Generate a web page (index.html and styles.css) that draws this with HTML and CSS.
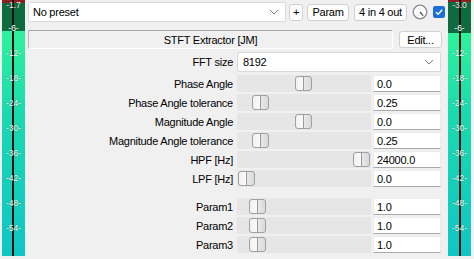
FILE: index.html
```html
<!DOCTYPE html>
<html lang="en">
<head>
<meta charset="utf-8">
<title>STFT Extractor [JM]</title>
<link rel="stylesheet" href="styles.css">
</head>
<body>
  <div class="meter meter-left">
    <div class="meter-peak">-1.7</div>
    <div class="meter-tick">-6-</div>
    <div class="meter-tick">-12-</div>
    <div class="meter-tick">-18-</div>
    <div class="meter-tick">-24-</div>
    <div class="meter-tick">-30-</div>
    <div class="meter-tick">-36-</div>
    <div class="meter-tick">-42-</div>
    <div class="meter-tick">-48-</div>
    <div class="meter-tick">-54-</div>
  </div>

  <div class="main">
    <div class="topbar">
      <div class="select preset-select">
        <span>No preset</span>
        <svg class="chevron" width="10" height="6" viewBox="0 0 10 6"><polyline points="1,1 5,5 9,1" /></svg>
      </div>
      <div class="btn btn-plus">+</div>
      <div class="btn btn-param">Param</div>
      <div class="btn btn-io">4 in 4 out</div>
      <svg class="knob" width="16" height="16" viewBox="0 0 16 16">
        <circle cx="8" cy="8" r="6.8" />
        <line x1="8" y1="8" x2="11.2" y2="11.6" />
      </svg>
      <svg class="check" width="12" height="12" viewBox="0 0 12 12">
        <rect x="0" y="0" width="12" height="12" rx="2" />
        <polyline points="3,6.2 5.1,8.3 9.2,3.8" />
      </svg>
    </div>

    <div class="header-row">
      <div class="fx-name">STFT Extractor [JM]</div>
      <div class="btn btn-edit">Edit...</div>
    </div>

    <div class="fft-row">
      <div class="label">FFT size</div>
      <div class="select fft-select">
        <span>8192</span>
        <svg class="chevron" width="10" height="6" viewBox="0 0 10 6"><polyline points="1,1 5,5 9,1" /></svg>
      </div>
    </div>

    <div class="param-row">
      <div class="label">Phase Angle</div>
      <div class="track"><div class="thumb" style="margin-left: 58px"></div></div>
      <div class="value">0.0</div>
    </div>
    <div class="param-row">
      <div class="label">Phase Angle tolerance</div>
      <div class="track"><div class="thumb" style="margin-left: 15px"></div></div>
      <div class="value">0.25</div>
    </div>
    <div class="param-row">
      <div class="label">Magnitude Angle</div>
      <div class="track"><div class="thumb" style="margin-left: 58px"></div></div>
      <div class="value">0.0</div>
    </div>
    <div class="param-row">
      <div class="label">Magnitude Angle tolerance</div>
      <div class="track"><div class="thumb" style="margin-left: 15px"></div></div>
      <div class="value">0.25</div>
    </div>
    <div class="param-row">
      <div class="label">HPF [Hz]</div>
      <div class="track"><div class="thumb" style="margin-left: 116px"></div></div>
      <div class="value">24000.0</div>
    </div>
    <div class="param-row">
      <div class="label">LPF [Hz]</div>
      <div class="track"><div class="thumb" style="margin-left: 1px"></div></div>
      <div class="value">0.0</div>
    </div>

    <div class="spacer"></div>

    <div class="param-row">
      <div class="label">Param1</div>
      <div class="track"><div class="thumb" style="margin-left: 12px"></div></div>
      <div class="value">1.0</div>
    </div>
    <div class="param-row">
      <div class="label">Param2</div>
      <div class="track"><div class="thumb" style="margin-left: 12px"></div></div>
      <div class="value">1.0</div>
    </div>
    <div class="param-row">
      <div class="label">Param3</div>
      <div class="track"><div class="thumb" style="margin-left: 12px"></div></div>
      <div class="value">1.0</div>
    </div>
  </div>

  <div class="meter meter-right">
    <div class="meter-peak">-3.0</div>
    <div class="meter-tick">-6-</div>
    <div class="meter-tick">-12-</div>
    <div class="meter-tick">-18-</div>
    <div class="meter-tick">-24-</div>
    <div class="meter-tick">-30-</div>
    <div class="meter-tick">-36-</div>
    <div class="meter-tick">-42-</div>
    <div class="meter-tick">-48-</div>
    <div class="meter-tick">-54-</div>
  </div>
</body>
</html>
```

FILE: styles.css
```css
html, body {
    margin: 0;
    padding: 0;
}
body {
    width: 474px;
    height: 259px;
    overflow: hidden;
    background: #f0f0f0;
    display: flex;
    align-items: flex-start;
    font-family: "Liberation Sans", Arial, sans-serif;
    font-size: 11px;
    letter-spacing: -0.25px;
    color: #000;
}

/* level meters */
.meter {
    position: relative;
    width: 23px;
    height: 256px;
    display: flex;
    flex-direction: column;
    align-items: center;
    font-size: 8.5px;
    letter-spacing: 0;
    color: #f4fff8;
    text-shadow: 0 0 1px #2a5a44;
}
.meter::before {
    content: "";
    position: absolute;
    top: 0;
    bottom: 0;
    left: 10px;
    width: 2px;
    background: #111;
}
.meter-left {
    margin-left: 2px;
    background: linear-gradient(to bottom, #8c1f22 0, #8c1f22 3px, #0d6b3f 3px, #0d6b3f 31px, #2ff29b 31px, #1ad9b0 45%, #10c6c4 100%);
}
.meter-right {
    margin-left: 1px;
    background: linear-gradient(to bottom, #8c1f22 0, #8c1f22 2px, #0d6b3f 2px, #0d6b3f 33px, #2ff29b 33px, #1ad9b0 45%, #10c6c4 100%);
}
.meter-right::before {
    left: 11px;
}
.meter-peak {
    position: relative;
    height: 16px;
    line-height: 11px;
    color: #f3dede;
}
.meter-tick {
    position: relative;
    height: 25px;
    line-height: 25px;
}

/* main panel */
.main {
    margin-left: 3px;
    width: 419px;
    display: flex;
    flex-direction: column;
}

.topbar {
    margin-top: 2px;
    height: 20px;
    display: flex;
    align-items: center;
}
.select {
    box-sizing: border-box;
    height: 20px;
    background: #fff;
    border: 1px solid #d9d9d9;
    border-radius: 2px;
    display: flex;
    align-items: center;
    justify-content: space-between;
    padding: 0 6px 0 4px;
}
.chevron polyline {
    fill: none;
    stroke: #7a7a7a;
    stroke-width: 1;
}
.preset-select {
    width: 258px;
}
.btn {
    box-sizing: border-box;
    height: 17px;
    background: #fdfdfd;
    border: 1px solid #d0d0d0;
    border-radius: 3px;
    display: flex;
    align-items: center;
    justify-content: center;
}
.btn-plus {
    margin-left: 3px;
    width: 14px;
}
.btn-param {
    margin-left: 4px;
    width: 42px;
}
.btn-io {
    margin-left: 5px;
    width: 53px;
}
.knob {
    margin-left: 5px;
}
.knob circle {
    fill: #fafafa;
    stroke: #8a8a8a;
    stroke-width: 1.3;
}
.knob line {
    stroke: #555;
    stroke-width: 1.3;
}
.check {
    margin-left: 5px;
}
.check rect {
    fill: #1c6fd6;
}
.check polyline {
    fill: none;
    stroke: #fff;
    stroke-width: 1.4;
}

.header-row {
    margin-top: 8px;
    height: 19px;
    display: flex;
    align-items: center;
}
.fx-name {
    box-sizing: border-box;
    width: 365px;
    height: 19px;
    border-top: 1px solid #a8a8a8;
    border-left: 1px solid #b8b8b8;
    border-right: 1px solid #fff;
    border-bottom: 1px solid #fff;
    display: flex;
    align-items: center;
    justify-content: center;
}
.btn-edit {
    margin-left: 6px;
    width: 43px;
}

.fft-row {
    margin-top: 3px;
    margin-bottom: 2px;
    display: flex;
    align-items: center;
}
.label {
    width: 205px;
    text-align: right;
    white-space: nowrap;
}
.fft-select {
    margin-left: 4px;
    width: 204px;
    padding-left: 5px;
}

.param-row {
    height: 19px;
    display: flex;
    align-items: center;
}
.track {
    margin-left: 4px;
    width: 134px;
    height: 17px;
    background: #e6e6e6;
    display: flex;
    align-items: center;
}
.thumb {
    box-sizing: border-box;
    width: 17px;
    height: 15px;
    border: 1px solid #a0a0a0;
    border-radius: 3px;
    background: linear-gradient(to right, #f2f2f2 0, #fafafa 46%, #9a9a9a 46%, #9a9a9a 54%, #e8e8e8 54%, #dadada 100%);
}
.value {
    box-sizing: border-box;
    margin-left: 2px;
    width: 68px;
    height: 17px;
    padding-left: 3px;
    background: #fff;
    border: 1px solid #ececec;
    border-bottom-color: #a9a9a9;
    display: flex;
    align-items: center;
}
.spacer {
    height: 9px;
}
```
